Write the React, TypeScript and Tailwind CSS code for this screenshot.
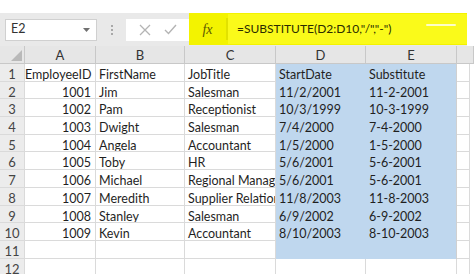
import React, { FC } from 'react';

type Row = [string, string, string, string, string];

const rows: Row[] = [
  ['EmployeeID', 'FirstName', 'JobTitle', 'StartDate', 'Substitute'],
  ['1001', 'Jim', 'Salesman', '11/2/2001', '11-2-2001'],
  ['1002', 'Pam', 'Receptionist', '10/3/1999', '10-3-1999'],
  ['1003', 'Dwight', 'Salesman', '7/4/2000', '7-4-2000'],
  ['1004', 'Angela', 'Accountant', '1/5/2000', '1-5-2000'],
  ['1005', 'Toby', 'HR', '5/6/2001', '5-6-2001'],
  ['1006', 'Michael', 'Regional Manager', '5/6/2001', '5-6-2001'],
  ['1007', 'Meredith', 'Supplier Relations', '11/8/2003', '11-8-2003'],
  ['1008', 'Stanley', 'Salesman', '6/9/2002', '6-9-2002'],
  ['1009', 'Kevin', 'Accountant', '8/10/2003', '8-10-2003'],
  ['', '', '', '', ''],
  ['', '', '', '', ''],
];

const cell = 'h-[17.7px] border-r border-b border-[#dadada] overflow-hidden whitespace-nowrap leading-[17.7px] pt-[2px]';
const blue = 'h-[17.7px] bg-[#bfd7ee] overflow-hidden whitespace-nowrap leading-[17.7px] pt-[2px] pl-[3px]';

const App: FC = () => {
  return (
    <div
      className="w-[474px] h-[274px] overflow-hidden bg-white text-[#1f1f1f]"
      style={{ fontFamily: 'Lato, "Liberation Sans", sans-serif' }}
    >
      <div className="h-[13px] bg-white" />
      {/* formula bar */}
      <div className="h-[33px] bg-[#e9e9e9] flex items-center">
        <div className="ml-[5px] w-[92px] h-[22px] bg-white border border-[#d0d0d0] flex items-center justify-between px-[5px] text-[12.5px] text-[#333]">
          <span>E2</span>
          <svg width="7" height="4" viewBox="0 0 7 4" className="mr-[1px]">
            <path d="M0 0 L7 0 L3.5 4 Z" fill="#707070" />
          </svg>
        </div>
        <div className="w-[29px] flex flex-col items-center gap-[2px]">
          <span className="w-[2px] h-[2px] bg-[#a8a8a8]" />
          <span className="w-[2px] h-[2px] bg-[#a8a8a8]" />
          <span className="w-[2px] h-[2px] bg-[#a8a8a8]" />
        </div>
        <div className="w-[63px] h-[22px] bg-white flex items-center justify-around px-[6px]">
          <svg width="12" height="12" viewBox="0 0 12 12">
            <path d="M1 1 L11 11 M11 1 L1 11" stroke="#b4b4b4" strokeWidth="1.3" />
          </svg>
          <svg width="13" height="11" viewBox="0 0 13 11">
            <path d="M1 6 L4.5 9.5 L12 1" stroke="#b4b4b4" strokeWidth="1.4" fill="none" />
          </svg>
        </div>
        <div className="h-[32px] w-[278px] bg-[#f3f300] flex items-center self-start">
          <div className="w-[37px] h-[22px] mt-[1px] flex items-center justify-center">
            <span
              className="italic text-[14px] text-[#5c5a00]"
              style={{ fontFamily: '"Liberation Serif", serif' }}
            >
              fx
            </span>
          </div>
          <div className="w-[2px] h-[22px] bg-[#e2e200]" />
          <div className="flex-1 h-[30px] bg-[#fafa1a] flex items-center pl-[9px] text-[12px] text-[#2b2b00] relative">
            =SUBSTITUTE(D2:D10,"/","-")
            <span className="absolute left-[198px] top-[10px] w-[30px] h-[2px] bg-[#fdfdc8] rounded-full" />
          </div>
        </div>
        <div className="flex-1 h-full bg-white" />
      </div>
      {/* sheet */}
      <div className="grid grid-cols-[25px_71px_89px_91px_90px_91px_1fr] text-[12.5px]">
        <div className="h-[18px] bg-[#e6e6e6] border-r border-b border-[#c8c8c8] relative">
          <svg width="11" height="11" viewBox="0 0 11 11" className="absolute right-[2px] bottom-[2px]">
            <path d="M11 0 L11 11 L0 11 Z" fill="#b9b9b9" />
          </svg>
        </div>
        {['A', 'B', 'C', 'D', 'E', ''].map((h, i) => (
          <div
            key={i}
            className="h-[18px] bg-[#e6e6e6] border-r border-b border-[#c8c8c8] text-center leading-[18px] text-[#333] text-[13px]"
          >
            {h}
          </div>
        ))}
        {rows.map((r, i) => (
          <React.Fragment key={i}>
            <div className={`${cell} bg-[#ececec] border-[#d0d0d0] text-center text-[#444] text-[13px]`}>{i + 1}</div>
            <div className={`${cell} text-right pr-[4px]`}>{r[0]}</div>
            <div className={`${cell} pl-[3px]`}>{r[1]}</div>
            <div className={`${cell} pl-[3px]`}>{r[2]}</div>
            {i < 11 ? (
              <>
                <div className={blue}>{r[3]}</div>
                <div className={`${blue} border-r border-[#d0d0d0]`}>{r[4]}</div>
              </>
            ) : (
              <>
                <div className={`${cell} pl-[3px]`}>{r[3]}</div>
                <div className={`${cell} pl-[3px]`}>{r[4]}</div>
              </>
            )}
            <div className={`${cell} mr-[4px]`} />
          </React.Fragment>
        ))}
      </div>
    </div>
  );
};

export default App;
